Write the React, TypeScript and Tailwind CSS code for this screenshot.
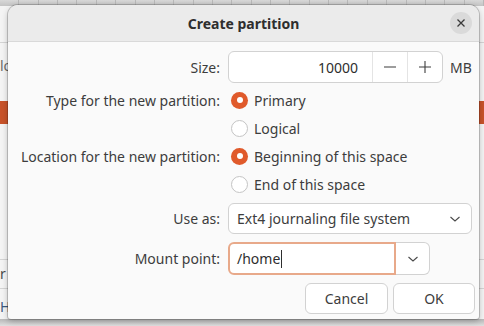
import React from "react";

const font = { fontFamily: '"Noto Sans", "DejaVu Sans", sans-serif' };

function Radio({ checked, label }: { checked: boolean; label: string }) {
  return (
    <div className="flex items-center h-[28px] gap-[6px] pl-[3px] whitespace-nowrap">
      {checked ? (
        <span className="w-[17px] h-[17px] rounded-full bg-[#e05a2b] flex items-center justify-center">
          <span className="w-[6px] h-[6px] rounded-full bg-white" />
        </span>
      ) : (
        <span className="w-[17px] h-[17px] rounded-full border border-[#c4c4c4] bg-white" />
      )}
      <span>{label}</span>
    </div>
  );
}

function Chevron() {
  return (
    <svg width="12" height="8" viewBox="0 0 12 8" fill="none">
      <path d="M1.5 2 L6 6 L10.5 2" stroke="#4a4a4a" strokeWidth="1.1" />
    </svg>
  );
}

export default function App() {
  const gridCols = Array.from({ length: 25 }, (_, i) => i);
  return (
    <div className="relative w-[484px] h-[326px] overflow-hidden bg-[#e6e6e6]" style={font}>
      {/* background window */}
      <div className="absolute inset-0 bg-[#f4f4f4]">
        <div className="flex h-[6px] bg-[#cfcfcf]">
          {gridCols.map((i) => (
            <div key={i} className="w-[20px] h-full border-r border-[#b8b8b8] bg-gradient-to-b from-[#d8d8d8] to-[#c4c4c4]" />
          ))}
        </div>
        <div className="absolute left-0 right-0 top-[42px] h-px bg-[#d4d4d4]" />
        <div className="absolute left-0 top-[55px] text-[14px] text-[#6a6a6a]">lo</div>
        <div className="absolute left-0 right-0 top-[101px] h-[23px] bg-[#c8532a]" />
        <div className="absolute left-0 right-0 top-[259px] h-px bg-[#d4d4d4]" />
        <div className="absolute left-0 top-[263px] text-[14px] text-[#4a4a4a]">r i</div>
        <div className="absolute left-0 right-0 top-[288px] h-px bg-[#d4d4d4]" />
        <div className="absolute left-0 top-[296px] text-[14px] text-[#3d5a80]">H.</div>
        <div className="absolute left-0 right-0 top-[319px] bottom-0 bg-gradient-to-b from-[#b8b8b8] to-[#e0e0e0]" />
      </div>

      {/* dialog */}
      <div className="absolute left-[8px] top-[5px] w-[471px] h-[314px] rounded-t-[10px] rounded-b-[3px] bg-[#fafafa] overflow-hidden shadow-[0_0_0_1px_rgba(0,0,0,0.18),0_2px_6px_rgba(0,0,0,0.25)] text-[#3d3d3d] text-[14px]">
        <div className="relative h-[37px] bg-[#ebebeb] border-b border-[#d9d9d9] flex items-center justify-center">
          <span className="font-bold text-[14px] text-[#2e2e2e]">Create partition</span>
          <button className="absolute right-[7px] top-[7px] w-[22px] h-[22px] rounded-full bg-[#dadada] flex items-center justify-center">
            <svg width="10" height="10" viewBox="0 0 10 10">
              <path d="M1.5 1.5 L8.5 8.5 M8.5 1.5 L1.5 8.5" stroke="#3a3a3a" strokeWidth="1.3" />
            </svg>
          </button>
        </div>

        <div className="grid grid-cols-[204px_1fr] gap-x-[8px] pl-[8px] pr-[8px] pt-[9px] whitespace-nowrap">
          {/* Size */}
          <div className="flex items-center justify-end h-[32px]">Size:</div>
          <div className="flex items-center gap-[7px] h-[32px]">
            <div className="flex w-[215px] h-[32px] rounded-[6px] border border-[#d2d2d2] bg-white overflow-hidden">
              <div className="flex-1 flex items-center justify-end pr-[14px] text-[#2e2e2e]">10000</div>
              <div className="w-[35px] border-l border-[#e4e4e4] flex items-center justify-center">
                <svg width="12" height="2" viewBox="0 0 12 2"><path d="M0 1 H12" stroke="#3d3d3d" strokeWidth="1.1" /></svg>
              </div>
              <div className="w-[35px] border-l border-[#e4e4e4] flex items-center justify-center">
                <svg width="12" height="12" viewBox="0 0 12 12"><path d="M0 6 H12 M6 0 V12" stroke="#3d3d3d" strokeWidth="1.1" /></svg>
              </div>
            </div>
            <span>MB</span>
          </div>

          {/* Type */}
          <div className="flex items-center justify-end h-[28px] mt-[3px]">Type for the new partition:</div>
          <div className="mt-[3px]"><Radio checked label="Primary" /></div>
          <div />
          <div><Radio checked={false} label="Logical" /></div>

          {/* Location */}
          <div className="flex items-center justify-end h-[28px]">Location for the new partition:</div>
          <div><Radio checked label="Beginning of this space" /></div>
          <div />
          <div><Radio checked={false} label="End of this space" /></div>

          {/* Use as */}
          <div className="flex items-center justify-end h-[31px] mt-[5px]">Use as:</div>
          <div className="mt-[5px] flex items-center justify-between h-[31px] rounded-[6px] border border-[#d2d2d2] bg-white pl-[8px] pr-[10px]">
            <span>Ext4 journaling file system</span>
            <Chevron />
          </div>

          {/* Mount point */}
          <div className="flex items-center justify-end h-[33px] mt-[8px]">Mount point:</div>
          <div className="mt-[8px] flex h-[33px]">
            <div className="w-[168px] h-full rounded-l-[6px] border-2 border-[#e8a98a] bg-white flex items-center pl-[7px] text-[#2e2e2e]">
              /home<span className="w-px h-[18px] bg-[#2e2e2e] ml-[1px]" />
            </div>
            <div className="w-[34px] h-full rounded-r-[6px] border border-l-0 border-[#d2d2d2] bg-white flex items-center justify-center">
              <Chevron />
            </div>
          </div>
        </div>

        <div className="flex justify-end gap-[5px] pr-[4px] mt-[8px]">
          <button className="w-[83px] h-[31px] rounded-[6px] border border-[#d2d2d2] bg-white text-[#3d3d3d]">Cancel</button>
          <button className="w-[82px] h-[31px] rounded-[6px] border border-[#d2d2d2] bg-white text-[#3d3d3d]">OK</button>
        </div>
      </div>
    </div>
  );
}
